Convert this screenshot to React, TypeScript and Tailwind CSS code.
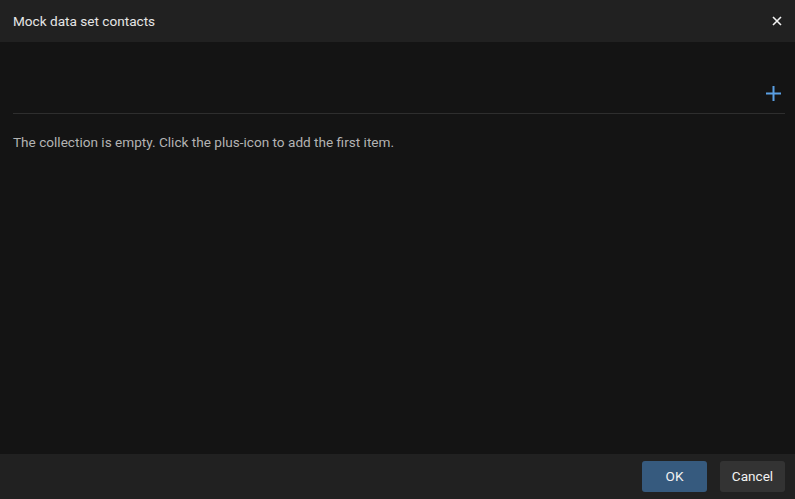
import { type FC } from 'react'

const CloseIcon: FC = () => (
  <svg width="10" height="10" viewBox="0 0 10 10" fill="none">
    <path d="M1 1L9 9M9 1L1 9" stroke="#f2f2f2" strokeWidth="1.6" />
  </svg>
)

const PlusIcon: FC = () => (
  <svg width="15" height="15" viewBox="0 0 15 15" fill="none">
    <path d="M7.5 0V15M0 7.5H15" stroke="#5a9fe3" strokeWidth="2" />
  </svg>
)

export default function App() {
  return (
    <div
      className="flex h-[499px] w-[795px] flex-col bg-[#141414]"
      style={{ fontFamily: 'Roboto, "Liberation Sans", sans-serif' }}
    >
      <div className="flex h-[42px] items-center justify-between bg-[#212121] pl-[13px] pr-[12px]">
        <h4 className="text-[13.6px] text-[#e6e6e6]">Mock data set contacts</h4>
        <button className="flex size-[12px] items-center justify-center">
          <CloseIcon />
        </button>
      </div>

      <div className="flex flex-1 flex-col pl-[13px] pr-[10px]">
        <div className="flex h-[72px] items-end justify-end border-b border-[#2e2e2e] pb-[12px] pr-[4px]">
          <button>
            <PlusIcon />
          </button>
        </div>
        <p className="mt-[18px] text-[13.6px] text-[#b3b3b3]">
          The collection is empty. Click the plus-icon to add the first item.
        </p>
      </div>

      <div className="flex h-[45px] items-center justify-end gap-[13px] bg-[#212121] pr-[10px]">
        <button className="h-[31px] w-[65px] rounded-[3px] bg-[#365a7e] text-[13.6px] text-[#f2f2f2]">
          OK
        </button>
        <button className="h-[31px] w-[65px] rounded-[3px] bg-[#333333] text-[13.6px] text-[#f2f2f2]">
          Cancel
        </button>
      </div>
    </div>
  )
}
